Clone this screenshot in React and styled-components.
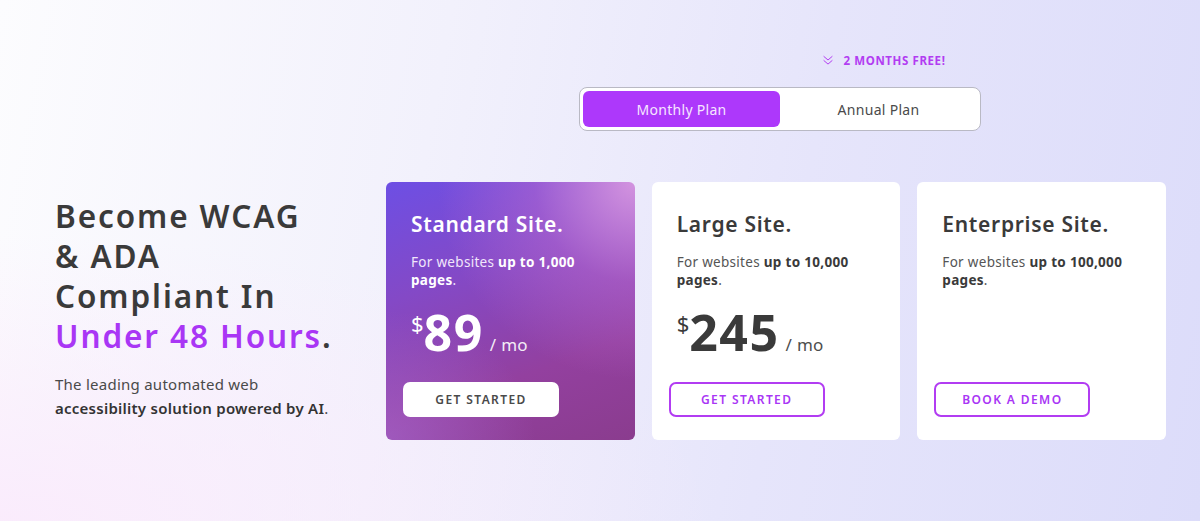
import React, { useState } from 'react';
import styled, { createGlobalStyle } from 'styled-components';

const GlobalStyle = createGlobalStyle`
  html, body {
    margin: 0;
    padding: 0;
  }
  body {
    font-family: "Noto Sans", "DejaVu Sans", sans-serif;
    color: #3b3b3b;
  }
  * { box-sizing: border-box; }
`;

const Page = styled.div`
  width: 1200px;
  height: 521px;
  overflow: hidden;
  background:
    radial-gradient(ellipse 60% 55% at 0% 100%, rgba(250, 234, 252, 0.9), rgba(250, 234, 252, 0) 100%),
    linear-gradient(100deg, #fcfcfe 0%, #f2f1fc 35%, #e6e5fb 65%, #dcdcfa 100%);
  display: grid;
  grid-template-columns: 331px 780px;
  grid-template-rows: auto auto;
  align-content: start;
  padding: 51px 0 0 55px;
`;

const TopArea = styled.div`
  grid-column: 2;
  grid-row: 1;
  display: flex;
  flex-direction: column;
  align-items: center;
  padding-left: 8px;
  margin-bottom: 51px;
`;

const Promo = styled.div`
  display: flex;
  align-items: center;
  gap: 9px;
  margin-left: 206px;
  height: 18px;
  font-size: 11.5px;
  font-weight: 700;
  letter-spacing: 0.6px;
  color: #b23cf2;
  margin-bottom: 18px;
`;

const Toggle = styled.div`
  width: 402px;
  height: 44px;
  border: 1px solid #b9b9c4;
  border-radius: 8px;
  background: #fff;
  padding: 3px;
  display: flex;
`;

const ToggleOption = styled.button`
  flex: 1;
  border: none;
  border-radius: 6px;
  font-family: inherit;
  font-size: 14px;
  letter-spacing: 0.3px;
  cursor: pointer;
  background: ${p => (p.active ? '#ad38fb' : 'transparent')};
  color: ${p => (p.active ? '#f6e6ff' : '#4a4a4a')};
`;

const Intro = styled.div`
  grid-column: 1;
  grid-row: 2;
  align-self: start;
  padding-top: 14px;
`;

const Headline = styled.h1`
  margin: 0;
  font-size: 31.5px;
  line-height: 40px;
  font-weight: 600;
  color: #3a3a3a;
  letter-spacing: 1.9px;
`;

const Accent = styled.span`
  color: #a936f5;
`;

const Lead = styled.p`
  margin: 16px 0 0;
  font-size: 15px;
  line-height: 24px;
  letter-spacing: 0.25px;
  color: #4a4a4a;

  b {
    font-weight: 600;
    color: #333;
  }
`;

const Cards = styled.div`
  grid-column: 2;
  grid-row: 2;
  display: flex;
  gap: 17px;
`;

const Card = styled.div`
  width: 249px;
  height: 258px;
  border-radius: 6px;
  padding: 27px 17px 23px 25px;
  display: flex;
  flex-direction: column;
  color: ${p => (p.featured ? '#fff' : '#3a3a3a')};
  background: ${p =>
    p.featured
      ? `radial-gradient(circle at 100% 0%, rgba(216, 152, 224, 0.95) 0%, rgba(190, 110, 210, 0.45) 28%, rgba(160, 70, 180, 0) 55%),
         radial-gradient(ellipse 60% 50% at 0% 100%, rgba(170, 110, 215, 0.55), rgba(170, 110, 215, 0) 100%),
         linear-gradient(160deg, #6d4fe4 0%, #8449c6 35%, #93409f 70%, #8a3c8e 100%)`
      : '#fff'};
`;

const CardTitle = styled.h2`
  margin: 0;
  font-size: 21px;
  line-height: 30px;
  font-weight: 600;
  letter-spacing: 0.7px;
`;

const CardDesc = styled.p`
  margin: 14px 0 0;
  font-size: 13.5px;
  line-height: 18px;
  letter-spacing: 0.3px;
  max-width: 190px;
  color: ${p => (p.featured ? '#f1e6fb' : '#555')};

  b {
    font-weight: 700;
    color: ${p => (p.featured ? '#fff' : '#3a3a3a')};
  }
`;

const Price = styled.div`
  display: flex;
  align-items: flex-start;
  margin-top: 15px;
  height: 56px;
`;

const Currency = styled.span`
  font-size: 22px;
  line-height: 22px;
  margin-top: 8px;
  font-weight: 400;
`;

const Amount = styled.span`
  font-size: 50px;
  line-height: 56px;
  font-weight: 700;
  letter-spacing: 1.5px;
`;

const Period = styled.span`
  font-size: 17px;
  align-self: flex-end;
  margin: 0 0 4px 6px;
  letter-spacing: 0.3px;
  opacity: 0.9;
`;

const Spacer = styled.div`
  flex: 1;
`;

const CtaButton = styled.button`
  margin-left: -8px;
  width: 156px;
  height: 35px;
  border-radius: 7px;
  font-family: inherit;
  font-size: 12px;
  font-weight: 600;
  letter-spacing: 1.4px;
  cursor: pointer;
  background: #fff;
  border: ${p => (p.filled ? 'none' : '2px solid #b23cf2')};
  color: ${p => (p.filled ? '#4a4a4a' : '#a936f5')};
`;

const ChevronsDown = () => (
  <svg width="14" height="14" viewBox="0 0 24 24" fill="none" stroke="#b23cf2" strokeWidth="1.7" strokeLinecap="round" strokeLinejoin="round">
    <path d="M5 6l7 6 7-6" />
    <path d="M5 13l7 6 7-6" />
  </svg>
);

const plans = [
  { name: 'Standard Site.', limit: 'up to 1,000', price: '89', cta: 'GET STARTED', featured: true },
  { name: 'Large Site.', limit: 'up to 10,000', price: '245', cta: 'GET STARTED' },
  { name: 'Enterprise Site.', limit: 'up to 100,000', cta: 'BOOK A DEMO' },
];

const App = () => {
  const [plan, setPlan] = useState('monthly');

  return (
    <>
      <GlobalStyle />
      <Page>
        <TopArea>
          <Promo>
            <ChevronsDown />
            2 MONTHS FREE!
          </Promo>
          <Toggle>
            <ToggleOption active={plan === 'monthly'} onClick={() => setPlan('monthly')}>
              Monthly Plan
            </ToggleOption>
            <ToggleOption active={plan === 'annual'} onClick={() => setPlan('annual')}>
              Annual Plan
            </ToggleOption>
          </Toggle>
        </TopArea>

        <Intro>
          <Headline>
            Become WCAG
            <br />& ADA
            <br />Compliant In
            <br />
            <Accent>Under 48 Hours</Accent>.
          </Headline>
          <Lead>
            The leading automated web
            <br />
            <b>accessibility solution powered by AI</b>.
          </Lead>
        </Intro>

        <Cards>
          {plans.map(p => (
            <Card key={p.name} featured={p.featured}>
              <CardTitle>{p.name}</CardTitle>
              <CardDesc featured={p.featured}>
                For websites <b>{p.limit} pages</b>.
              </CardDesc>
              {p.price && (
                <Price>
                  <Currency>$</Currency>
                  <Amount>{p.price}</Amount>
                  <Period>/ mo</Period>
                </Price>
              )}
              <Spacer />
              <CtaButton filled={p.featured}>{p.cta}</CtaButton>
            </Card>
          ))}
        </Cards>
      </Page>
    </>
  );
};

export default App;
